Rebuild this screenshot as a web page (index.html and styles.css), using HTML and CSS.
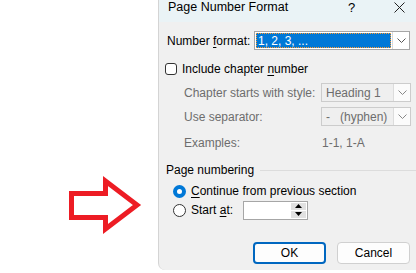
FILE: index.html
```html
<!DOCTYPE html>
<html lang="en">
<head>
    <meta charset="UTF-8">
    <title>Page Number Format</title>
    <link rel="stylesheet" href="styles.css">
</head>
<body>
    <div class="side">
        <svg class="arrow" width="158" height="273" viewBox="0 0 158 273">
            <polygon points="71.5,193.5 105.5,193.5 105.5,181 137,205 105.5,229 105.5,217.5 71.5,217.5"
                     fill="none" stroke="#ed1c24" stroke-width="5" stroke-linejoin="miter"/>
        </svg>
    </div>

    <div class="dialog">
        <div class="titlebar">
            <span class="title">Page Number Format</span>
            <span class="help">?</span>
            <span class="close">
                <svg width="11" height="11" viewBox="0 0 11 11"><path d="M0.5 0.5 L10.5 10.5 M10.5 0.5 L0.5 10.5" stroke="#222" stroke-width="1"/></svg>
            </span>
        </div>

        <div class="row nf-row">
            <span>Number <u>f</u>ormat:</span>
            <div class="combo nf-combo">
                <div class="combo-value selected"><span>1, 2, 3, ...</span></div>
                <div class="combo-btn"><svg width="9" height="5" viewBox="0 0 9 5"><path d="M0.5 0.5 L4.5 4.5 L8.5 0.5" fill="none" stroke="#555"/></svg></div>
            </div>
        </div>

        <div class="row check-row">
            <span class="checkbox"></span>
            <span>Include chapter <u>n</u>umber</span>
        </div>

        <div class="chapter">
            <span class="muted">Chapter starts with style:</span>
            <div class="combo small-combo">
                <div class="combo-value muted">Heading 1</div>
                <div class="combo-btn"><svg width="9" height="5" viewBox="0 0 9 5"><path d="M0.5 0.5 L4.5 4.5 L8.5 0.5" fill="none" stroke="#888"/></svg></div>
            </div>
            <span class="muted">Use separator:</span>
            <div class="combo small-combo">
                <div class="combo-value muted">-&nbsp;&nbsp;&nbsp;(hyphen)</div>
                <div class="combo-btn"><svg width="9" height="5" viewBox="0 0 9 5"><path d="M0.5 0.5 L4.5 4.5 L8.5 0.5" fill="none" stroke="#888"/></svg></div>
            </div>
            <span class="muted examples">Examples:</span>
            <span class="muted examples ex-value">1-1, 1-A</span>
        </div>

        <div class="group-head">
            <span>Page numbering</span>
            <div class="group-line"></div>
        </div>

        <div class="row radio-row first">
            <span class="radio checked"></span>
            <span><u>C</u>ontinue from previous section</span>
        </div>
        <div class="row radio-row second">
            <span class="radio"></span>
            <span class="start-label">Start <u>a</u>t:</span>
            <div class="spin">
                <div class="spin-field"></div>
                <div class="spin-btns">
                    <div class="spin-up"><svg width="7" height="4" viewBox="0 0 7 4"><polygon points="0,4 7,4 3.5,0" fill="#000"/></svg></div>
                    <div class="spin-down"><svg width="7" height="4" viewBox="0 0 7 4"><polygon points="0,0 7,0 3.5,4" fill="#000"/></svg></div>
                </div>
            </div>
        </div>

        <div class="buttons">
            <button class="btn default">OK</button>
            <button class="btn">Cancel</button>
        </div>
    </div>
</body>
</html>
```

FILE: styles.css
```css
body {
    margin: 0;
    width: 416px;
    height: 273px;
    overflow: hidden;
    display: flex;
    background: #fff;
    font-family: "Liberation Sans", Arial, sans-serif;
    font-size: 12px;
    color: #000;
    white-space: nowrap;
}
.side {
    width: 158px;
    flex-shrink: 0;
}
.arrow {
    display: block;
}
.dialog {
    width: 257px;
    height: 270px;
    flex-shrink: 0;
    background: #f0f0f0;
    border-left: 1px solid #d4d4d4;
    border-bottom-left-radius: 7px;
    display: flex;
    flex-direction: column;
}
.titlebar {
    height: 22px;
    background: #eaf3f6;
    display: flex;
    align-items: flex-start;
    padding-left: 9px;
    line-height: 15px;
}
.title {
    flex: 1;
    font-size: 12.5px;
}
.help {
    width: 14px;
    margin-right: 32px;
    font-size: 13px;
}
.close {
    width: 22px;
    display: flex;
    padding-top: 2px;
}
.row {
    display: flex;
    align-items: center;
    padding-left: 8px;
    padding-right: 6px;
}
u {
    text-decoration-thickness: 1px;
    text-underline-offset: 2px;
}
.nf-row {
    margin-top: 9px;
    height: 19px;
}
.combo {
    display: flex;
    height: 19px;
    box-sizing: border-box;
    border: 1px solid #a6a6a6;
    background: #fff;
}
.nf-combo {
    margin-left: auto;
    width: 156px;
}
.combo-value {
    flex: 1;
    display: flex;
    align-items: center;
    padding-left: 4px;
}
.combo-value.selected {
    margin: 1px;
    padding-left: 0;
    background: #0078d7;
    color: #fff;
    border: 1px dotted #ff9a2e;
}
.combo-value.selected span {
    padding-left: 1px;
}
.combo-btn {
    width: 16px;
    display: flex;
    align-items: center;
    justify-content: center;
    background: #fff;
    border-left: 1px solid #d9d9d9;
}
.check-row {
    margin-top: 12px;
    height: 13px;
    padding-left: 6px;
}
.checkbox {
    width: 12px;
    height: 12px;
    box-sizing: border-box;
    border: 1px solid #333;
    border-radius: 3px;
    background: #fff;
    margin-right: 5px;
}
.muted {
    color: #6d6d6d;
}
.chapter {
    display: grid;
    grid-template-columns: 137px 90px;
    row-gap: 5px;
    align-items: center;
    padding-left: 25px;
    margin-top: 8px;
}
.small-combo {
    border-color: #cccccc;
    background: #efefef;
}
.small-combo .combo-btn {
    background: #fbfbfb;
    border-left-color: #dcdcdc;
}
.examples {
    height: 16px;
    line-height: 16px;
    margin-top: 4px;
}
.ex-value {
    padding-left: 1px;
}
.group-head {
    display: flex;
    align-items: center;
    padding-left: 7px;
    margin-top: 12px;
    height: 14px;
}
.group-line {
    flex: 1;
    height: 1px;
    background: #dcdcdc;
    margin-left: 6px;
}
.radio-row {
    padding-left: 14px;
}
.radio-row.first {
    margin-top: 7px;
    height: 14px;
}
.radio-row.second {
    margin-top: 3px;
    height: 18px;
}
.radio {
    width: 13px;
    height: 13px;
    box-sizing: border-box;
    border-radius: 50%;
    border: 1px solid #333;
    background: #fff;
    margin-right: 5px;
    flex-shrink: 0;
}
.radio.checked {
    border: 4px solid #0078d7;
}
.start-label {
    width: 52px;
}
.spin {
    display: flex;
    width: 65px;
    height: 19px;
    box-sizing: border-box;
    border: 1px solid #a6a6a6;
    background: #fff;
}
.spin-field {
    flex: 1;
}
.spin-btns {
    width: 15px;
    display: flex;
    flex-direction: column;
    margin: 1px 1px 1px 0;
    gap: 1px;
}
.spin-up, .spin-down {
    flex: 1;
    background: #e1e1e1;
    display: flex;
    align-items: center;
    justify-content: center;
}
.buttons {
    display: flex;
    justify-content: flex-end;
    gap: 11px;
    margin-top: 23px;
    padding-right: 6px;
}
.btn {
    font-family: inherit;
    font-size: 12px;
    width: 73px;
    height: 22px;
    border: 1px solid #d0d0d0;
    border-radius: 4px;
    background: #fdfdfd;
    color: #000;
    padding: 0;
}
.btn.default {
    border: 2px solid #0067c0;
}
```
